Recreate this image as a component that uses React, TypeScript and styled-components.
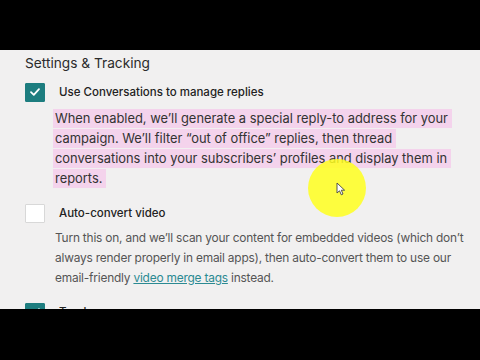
import React from "react";
import styled, { createGlobalStyle } from "styled-components";

const Global = createGlobalStyle`
  html, body { margin: 0; padding: 0; background: #000; }
  body { width: 480px; height: 360px; overflow: hidden; font-family: Inter, "Noto Sans", sans-serif; }
`;

const Frame = styled.div`
  display: flex;
  flex-direction: column;
  width: 480px;
  height: 360px;
  background: #000;
`;

const Bar = styled.div<{ $h: number }>`
  height: ${(p) => p.$h}px;
  flex: none;
  background: #000;
`;

const Screen = styled.div`
  position: relative;
  flex: none;
  height: 259px;
  background: #f1f0f0;
  overflow: hidden;
  padding: 5px 0 0 25px;
  box-sizing: border-box;
`;

const Title = styled.h2`
  margin: 0 0 11px;
  font-size: 13.7px;
  font-weight: 400;
  color: #2b2b2b;
  line-height: 16px;
`;

const Row = styled.div`
  display: flex;
  align-items: center;
  gap: 14px;
  height: 20px;
`;

const Box = styled.div<{ $on?: boolean }>`
  width: 20px;
  height: 19px;
  box-sizing: border-box;
  border-radius: 1px;
  display: flex;
  align-items: center;
  justify-content: center;
  background: ${(p) => (p.$on ? "#1d7d7f" : "#fff")};
  border: 1px solid ${(p) => (p.$on ? "#1d7d7f" : "#d8d8d8")};
`;

const Label = styled.span`
  font-size: 11.5px;
  font-weight: 500;
  color: #222;
`;

const Desc = styled.p<{ $tone?: string; $size: number; $track?: number }>`
  margin: 0;
  padding-left: 30px;
  width: 425px;
  font-size: ${(p) => p.$size}px;
  letter-spacing: ${(p) => p.$track || 0}px;
  line-height: 20px;
  color: ${(p) => p.$tone || "#333"};
`;

const Mark = styled.span`
  background: #f4d3ec;
  padding: 2px 4px 2px 2px;
  margin-left: -2px;
  -webkit-box-decoration-break: clone;
  box-decoration-break: clone;
`;

const Link = styled.a`
  color: #2b8a92;
  text-decoration: underline;
`;

const Section = styled.div<{ $gap: number }>`
  display: flex;
  flex-direction: column;
  gap: ${(p) => p.$gap}px;
  margin-bottom: 14px;
`;

const Spot = styled.div`
  position: absolute;
  left: 308px;
  top: 109px;
  width: 58px;
  height: 58px;
  border-radius: 50%;
  background: rgba(255, 255, 30, 0.85);
`;

const Cursor = styled.svg`
  position: absolute;
  left: 336px;
  top: 132px;
`;

const Check = () => (
  <svg width="12" height="10" viewBox="0 0 12 10">
    <path d="M2 5.2 L4.8 7.8 L10 2.2" fill="none" stroke="#fff" strokeWidth="1.8" strokeLinecap="round" strokeLinejoin="round" />
  </svg>
);

export default function App() {
  return (
    <Frame>
      <Global />
      <Bar $h={50} />
      <Screen>
        <Title>Settings &amp; Tracking</Title>
        <Section $gap={7}>
          <Row>
            <Box $on>
              <Check />
            </Box>
            <Label>Use Conversations to manage replies</Label>
          </Row>
          <Desc $size={12.9}>
            <Mark>
              When enabled, we’ll generate a special reply-to address for your campaign. We’ll filter “out of office” replies, then thread conversations into your subscribers’ profiles and display them in reports.
            </Mark>
          </Desc>
        </Section>
        <Section $gap={5}>
          <Row>
            <Box />
            <Label>Auto-convert video</Label>
          </Row>
          <Desc $tone="#555" $size={11.9} $track={-0.2}>
            Turn this on, and we’ll scan your content for embedded videos (which don’t always render properly in email apps), then auto-convert them to use our email-friendly <Link>video merge tags</Link> instead.
          </Desc>
        </Section>
        <Row>
          <Box $on>
            <Check />
          </Box>
          <Label>Track opens</Label>
        </Row>
        <Spot />
        <Cursor width="10" height="14" viewBox="0 0 10 14">
          <path d="M1 1 L1 11 L3.5 8.8 L5.3 12.8 L7 12 L5.3 8.2 L8.6 8.2 Z" fill="#fff" stroke="#444" strokeWidth="0.9" />
        </Cursor>
      </Screen>
      <Bar $h={51} />
    </Frame>
  );
}
